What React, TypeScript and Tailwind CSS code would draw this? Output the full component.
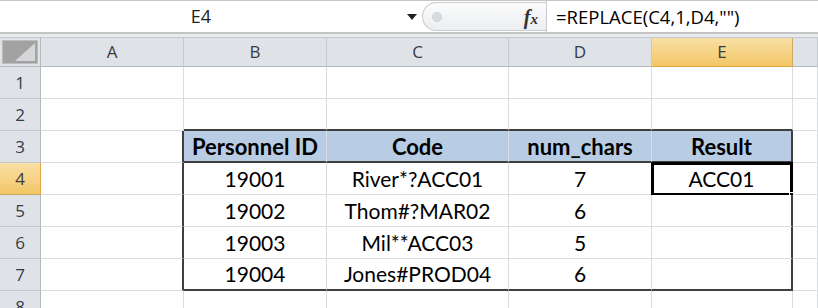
import React from "react";

const cols = ["A", "B", "C", "D", "E"];
const data: string[][] = [
  ["", "", "", "", ""],
  ["", "", "", "", ""],
  ["", "Personnel ID", "Code", "num_chars", "Result"],
  ["", "19001", "River*?ACC01", "7", "ACC01"],
  ["", "19002", "Thom#?MAR02", "6", ""],
  ["", "19003", "Mil**ACC03", "5", ""],
  ["", "19004", "Jones#PROD04", "6", ""],
  ["", "", "", "", ""],
];

function cellClass(r: number, c: number) {
  // r: 1-based row, c: 0=A .. 4=E, 5=F
  const inTable = r >= 3 && r <= 7;
  const rightDark = inTable && (c === 0 || c === 4);
  const bottomDark = c >= 1 && c <= 4 && (r === 2 || r === 3 || r === 7);
  let cls = "relative flex items-center justify-center text-black ";
  cls += rightDark ? "border-r-2 border-r-[#3f3f3f] " : "border-r border-r-[#dadcdd] ";
  cls += bottomDark ? "border-b-2 border-b-[#3f3f3f] " : "border-b border-b-[#dadcdd] ";
  if (r === 3 && c >= 1 && c <= 4) cls += "bg-[#b8cce4] font-bold text-[22px] ";
  else cls += "bg-white text-[21px] ";
  return cls;
}

export default function App() {
  return (
    <div className="w-[818px] h-[308px] overflow-hidden bg-white select-none" style={{ fontFamily: "Lato, 'Noto Sans', sans-serif" }}>
      {/* formula bar */}
      <div className="h-[34px] flex border-t border-[#c6c6c6] border-b-2 border-b-[#c4c4c4] bg-white">
        <div className="w-[402px] flex items-center justify-center text-[18px] text-[#222]" style={{ fontFamily: "'Open Sans', sans-serif" }}>
          E4
        </div>
        <div className="w-[20px] flex items-center justify-center">
          <div className="w-0 h-0 border-l-[5px] border-r-[5px] border-t-[6px] border-l-transparent border-r-transparent border-t-[#222]" />
        </div>
        <div className="w-[124px] mt-[1px] mb-[1px] rounded-l-full border border-r-0 border-[#c9cbcf] bg-gradient-to-b from-[#fbfbfb] to-[#eceef1] flex items-center justify-between pl-[9px] pr-[8px]">
          <div className="w-[10px] h-[10px] rounded-full bg-[#d8dadd] border border-[#cfd1d4]" />
          <span className="text-[20px] italic font-bold text-[#333] leading-none" style={{ fontFamily: "'Liberation Serif', serif" }}>
            f<span className="text-[15px]">x</span>
          </span>
        </div>
        <div className="flex-1 flex items-center pl-[9px] border-l border-[#c9cbcf] text-[18.5px] text-black" style={{ fontFamily: "'Open Sans', sans-serif" }}>
          =REPLACE(C4,1,D4,"")
        </div>
      </div>
      <div className="h-[4px] bg-[#e9ebee] border-b border-[#c5c9ce]" />

      {/* grid */}
      <div className="grid grid-cols-[41px_143px_143px_182px_143px_141px_1fr] grid-rows-[29px_repeat(8,32px)]">
        {/* header row */}
        <div className="bg-[#dfe3e8] border-r border-b border-[#b4b9bf] p-[2px]">
          <div className="w-full h-full bg-[#a2a2a2] border border-[#bdbdbd] relative overflow-hidden">
            <svg className="absolute right-[2px] bottom-[2px]" width="20" height="18" viewBox="0 0 20 18">
              <polygon points="20,0 20,18 0,18" fill="#d4d6d9" />
            </svg>
          </div>
        </div>
        {[...cols, ""].map((col, i) => (
          <div
            key={i}
            className={
              "flex items-center justify-center text-[17px] border-r border-b " +
              (col === "E"
                ? "bg-gradient-to-b from-[#f9e0a6] to-[#f3c665] border-r-[#c9ab62] border-b-[#e0a53e] text-[#3d3d3d]"
                : "bg-[#dfe3e8] border-r-[#c5cad1] border-b-[#b4b9bf] text-[#333c46]")
            }
            style={{ fontFamily: "'Open Sans', sans-serif" }}
          >
            {col}
          </div>
        ))}
        {data.map((row, ri) => {
          const r = ri + 1;
          return (
            <React.Fragment key={r}>
              <div
                className={
                  "flex items-center justify-center text-[17px] border-r border-b " +
                  (r === 4
                    ? "bg-gradient-to-b from-[#f9e0a6] to-[#f3c665] border-r-[#e0a53e] border-b-[#c9ab62] text-[#3d3d3d]"
                    : "bg-[#dfe3e8] border-r-[#b4b9bf] border-b-[#c5cad1] text-[#333c46]")
                }
                style={{ fontFamily: "'Open Sans', sans-serif" }}
              >
                {r}
              </div>
              {row.map((v, c) => (
                <div key={c} className={cellClass(r, c)}>
                  {v}
                  {r === 4 && c === 4 && (
                    <>
                      <div className="absolute -left-[1px] -top-[1px] -right-[2px] -bottom-[2px] border-[3px] border-black pointer-events-none" />
                      <div className="absolute -right-[5px] -bottom-[5px] w-[7px] h-[7px] bg-black border border-white" />
                    </>
                  )}
                </div>
              ))}
              <div className={cellClass(r, 5)} />
            </React.Fragment>
          );
        })}
      </div>
    </div>
  );
}
